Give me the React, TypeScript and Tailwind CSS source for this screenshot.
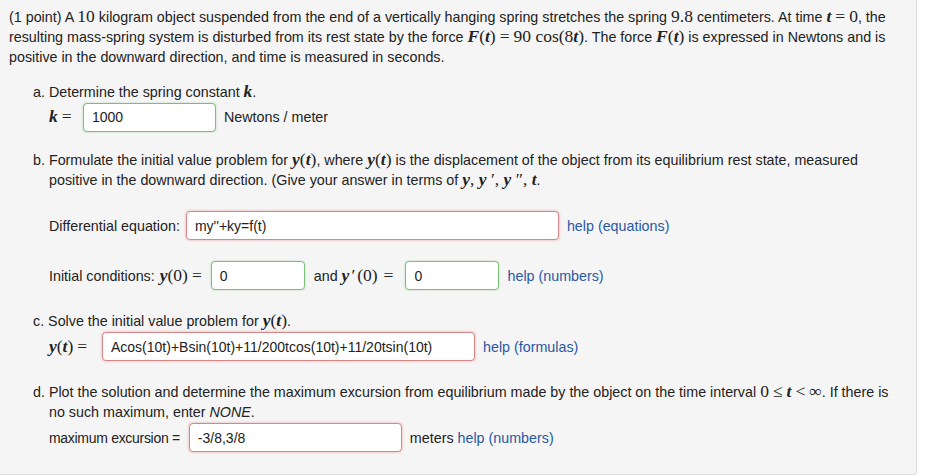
import React from "react";

const M = ({ children }: { children: React.ReactNode }) => (
  <span className="font-['Liberation_Serif',serif] text-[17.5px] leading-none">{children}</span>
);
const V = ({ children }: { children: React.ReactNode }) => (
  <i className="font-['Liberation_Serif',serif] text-[17.5px] leading-none font-semibold">{children}</i>
);
const Op = ({ children }: { children: React.ReactNode }) => (
  <span className="font-['Liberation_Serif',serif] text-[17.5px] leading-none mx-[4px]">{children}</span>
);

function Field({ value, w, ok }: { value: string; w: string; ok?: boolean }) {
  return (
    <div
      className={`${w} h-[29px] shrink-0 rounded-[4px] border bg-white px-[8px] flex items-center text-[14px] text-[#222] ${
        ok
          ? "border-[#7cbf7c] shadow-[0_0_2px_rgba(92,184,92,0.5)]"
          : "border-[#d98686] shadow-[0_0_3px_rgba(217,83,79,0.45)]"
      }`}
    >
      {value}
    </div>
  );
}

function Help({ children }: { children: React.ReactNode }) {
  return <span className="text-[#2a58a6]">{children}</span>;
}

export default function App() {
  return (
    <div className="w-[925px] h-[476px] bg-white font-['Liberation_Sans',Arial,sans-serif] text-[14.3px] leading-[20px] text-[#222]">
      <div className="w-[917px] h-[475px] bg-[#f5f5f5] border-r border-b border-[#dedede] rounded-br-[4px] pl-[9px] pr-[18px] pt-[7px]">
        <p>
          (1 point) A <M>10</M> kilogram object suspended from the end of a vertically hanging spring stretches the spring{" "}
          <M>9.8</M> centimeters. At time <V>t</V>
          <Op>=</Op>
          <M>0</M>, the resulting mass-spring system is disturbed from its rest state by the force <V>F</V>
          <M>(</M>
          <V>t</V>
          <M>)</M>
          <Op>=</Op>
          <M>90 cos(8</M>
          <V>t</V>
          <M>)</M>. The force <V>F</V>
          <M>(</M>
          <V>t</V>
          <M>)</M> is expressed in Newtons and is positive in the downward direction, and time is measured in seconds.
        </p>

        <div className="ml-[24px] mt-[15px]">
          <p>
            a. Determine the spring constant <V>k</V>.
          </p>
          <div className="flex items-center pl-[16px] h-[30px]">
            <span className="w-[34px] whitespace-nowrap">
              <V>k</V>
              <Op>=</Op>
            </span>
            <Field value="1000" w="w-[133px]" ok />
            <span className="ml-[8px]">Newtons / meter</span>
          </div>

          <p className="mt-[18px] pl-[16px] -indent-[16px]">
            b. Formulate the initial value problem for <V>y</V>
            <M>(</M>
            <V>t</V>
            <M>)</M>, where <V>y</V>
            <M>(</M>
            <V>t</V>
            <M>)</M> is the displacement of the object from its equilibrium rest state, measured positive in the downward
            direction. (Give your answer in terms of <V>y</V>
            <M>, </M>
            <V>y</V>
            <M> ′, </M>
            <V>y</V>
            <M> ″, </M>
            <V>t</V>.
          </p>

          <div className="pl-[16px]">
            <div className="flex items-center mt-[21px] h-[29px]">
              <span>Differential equation:</span>
              <span className="ml-[6px]">
                <Field value={"my''+ky=f(t)"} w="w-[373px]" />
              </span>
              <span className="ml-[8px]">
                <Help>help (equations)</Help>
              </span>
            </div>
            <div className="flex items-center mt-[21px] h-[29px]">
              <span>Initial conditions:</span>
              <span className="ml-[5px] mr-[5px] whitespace-nowrap">
                <V>y</V>
                <M>(0)</M>
                <Op>=</Op>
              </span>
              <Field value="0" w="w-[94px]" ok />
              <span className="ml-[9px] mr-[6px] whitespace-nowrap">
                and <V>y</V>
                <M>
                  <span className="ml-[2px] mr-[2px]">′</span>(0)
                </M>
                <span className="font-['Liberation_Serif',serif] text-[17.5px] leading-none mx-[6px]">=</span>
              </span>
              <Field value="0" w="w-[94px]" ok />
              <span className="ml-[8px]">
                <Help>help (numbers)</Help>
              </span>
            </div>
          </div>

          <p className="mt-[21px]">
            c. Solve the initial value problem for <V>y</V>
            <M>(</M>
            <V>t</V>
            <M>)</M>.
          </p>
          <div className="flex items-center pl-[16px] h-[29px] mt-[1px]">
            <span className="w-[53px] whitespace-nowrap">
              <V>y</V>
              <M>(</M>
              <V>t</V>
              <M>)</M>
              <Op>=</Op>
            </span>
            <Field value="Acos(10t)+Bsin(10t)+11/200tcos(10t)+11/20tsin(10t)" w="w-[373px]" />
            <span className="ml-[8px]">
              <Help>help (formulas)</Help>
            </span>
          </div>

          <p className="mt-[21px] pl-[16px] -indent-[16px]">
            d. Plot the solution and determine the maximum excursion from equilibrium made by the object on the time interval{" "}
            <M>0</M>
            <Op>≤</Op>
            <V>t</V>
            <Op>&lt;</Op>
            <M>∞</M>. If there is no such maximum, enter <i>NONE</i>.
          </p>
          <div className="flex items-center pl-[16px] h-[29px] mt-[1px]">
            <span className="text-[14px] tracking-[-0.3px]">maximum excursion =</span>
            <span className="ml-[9px]">
              <Field value="-3/8,3/8" w="w-[213px]" />
            </span>
            <span className="ml-[8px]">
              meters <Help>help (numbers)</Help>
            </span>
          </div>
        </div>
      </div>
    </div>
  );
}
